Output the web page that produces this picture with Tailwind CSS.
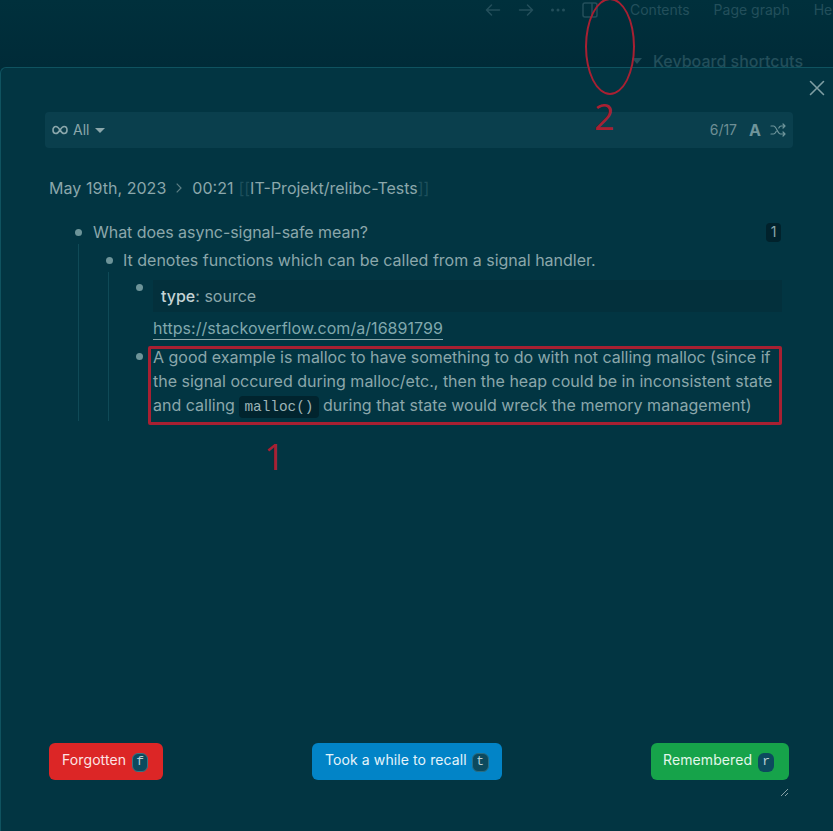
<!DOCTYPE html>
<html lang="en">
<head>
    <meta charset="UTF-8">
    <title>Flashcards</title>
    <script src="https://cdn.jsdelivr.net/npm/@tailwindcss/browser@4"></script>
</head>
<body class="bg-[#002b38] font-['Inter',sans-serif] text-[#8ba7ab]">
    <div class="relative h-[831px] w-[833px] overflow-hidden">
        <!-- Dimmed app header behind the modal -->
        <header class="h-[67px] overflow-hidden bg-gradient-to-b from-[#00303c] to-[#002b38] text-[#234f5b]">
            <div class="flex h-[19px] items-center pl-[485px] text-sm whitespace-nowrap">
                <svg class="h-4 w-4 shrink-0" viewBox="0 0 16 16" fill="none" stroke="currentColor" stroke-width="1.5" stroke-linecap="round" stroke-linejoin="round"><path d="M14.5 8h-13M6.5 3l-5 5 5 5"/></svg>
                <svg class="ml-[17px] h-4 w-4 shrink-0" viewBox="0 0 16 16" fill="none" stroke="currentColor" stroke-width="1.5" stroke-linecap="round" stroke-linejoin="round"><path d="M1.5 8h13M9.5 3l5 5-5 5"/></svg>
                <svg class="ml-[16px] h-4 w-4 shrink-0" viewBox="0 0 16 16" fill="currentColor"><circle cx="2.5" cy="8" r="1.5"/><circle cx="8" cy="8" r="1.5"/><circle cx="13.5" cy="8" r="1.5"/></svg>
                <svg class="ml-[16px] h-4 w-4 shrink-0" viewBox="0 0 16 16" fill="none" stroke="currentColor" stroke-width="1.5"><rect x="1" y="1" width="14" height="14" rx="2"/><path d="M10 1v14"/></svg>
                <span class="ml-[32px]">Contents</span>
                <span class="ml-[24px]">Page graph</span>
                <span class="ml-[24px]">Help</span>
            </div>
            <div class="mt-[30px] flex items-center pl-[632px] text-base font-medium whitespace-nowrap">
                <span class="h-0 w-0 border-x-[5px] border-t-[6px] border-x-transparent border-t-[#234f5b]"></span>
                <span class="ml-[11px]">Keyboard shortcuts</span>
            </div>
        </header>

        <!-- Flashcard modal -->
        <main class="flex h-[764px] flex-col rounded-tl-md border-t border-l border-[#0f5360] bg-[#023542] pt-[44px] pr-[40px] pl-[44px]">
            <button class="absolute top-[80px] right-[8px] text-[#7f9ea3]">
                <svg class="h-4 w-4" viewBox="0 0 16 16" fill="none" stroke="currentColor" stroke-width="1.6" stroke-linecap="round"><path d="M1.5 1.5l13 13M14.5 1.5l-13 13"/></svg>
            </button>

            <div class="flex h-9 items-center rounded bg-[#0a3f4d] pr-[7px] pl-[7px] text-sm">
                <svg class="h-[10px] w-4 text-[#8ba7ab]" viewBox="0 0 16 10" fill="none" stroke="currentColor" stroke-width="1.6"><path d="M8 5C6.6 2.8 5.6 1.5 3.9 1.5 2.2 1.5 1 3.1 1 5s1.2 3.5 2.9 3.5C5.6 8.5 6.6 7.2 8 5c1.4-2.2 2.4-3.5 4.1-3.5C13.8 1.5 15 3.1 15 5s-1.2 3.5-2.9 3.5C10.4 8.5 9.4 7.2 8 5z"/></svg>
                <span class="ml-[5px]">All</span>
                <span class="mt-[1px] ml-[6px] h-0 w-0 border-x-[5px] border-t-[5px] border-x-transparent border-t-[#8ba7ab]"></span>
                <span class="ml-auto text-[#6f8f95]">6/17</span>
                <span class="ml-3 text-base font-bold text-[#6f959b]">A</span>
                <svg class="ml-[9px] h-4 w-4 text-[#6f959b]" viewBox="0 0 16 16" fill="none" stroke="currentColor" stroke-width="1.2" stroke-linecap="round" stroke-linejoin="round"><path d="M1 4h2.5c3 0 4 8 7 8H15M1 12h2.5c1.2 0 2-1.2 2.7-2.500M8.800 6c.6-1.200 1.300-2 2.200-2H15M13 2l2 2-2 2M13 10l2 2-2 2"/></svg>
            </div>

            <div class="mt-[30px] flex h-[20px] items-center pl-1 text-base whitespace-nowrap">
                <span class="tracking-[0.05px]">May 19th, 2023</span>
                <svg class="mr-[10px] ml-[10px] h-[10px] w-[6px] text-[#5d7f85]" viewBox="0 0 6 10" fill="none" stroke="currentColor" stroke-width="1.2"><path d="M.7.7 5 5 .7 9.3"/></svg>
                <span>00:21</span>
                <span class="ml-[5px] text-[#1d4f5c]">[[</span><span>IT-Projekt/relibc-Tests</span><span class="text-[#1d4f5c]">]]</span>
            </div>

            <!-- Outline -->
            <div class="mt-[22px] pl-[30px] text-base">
                <div class="relative flex h-[24px] items-center">
                    <span class="absolute top-[9px] left-0 h-[7px] w-[7px] rounded-full bg-[#6d9499]"></span>
                    <span class="ml-[18px] tracking-[-0.05px]">What does async-signal-safe mean?</span>
                    <span class="mr-[12px] ml-auto flex h-[19px] w-[15px] items-center justify-center rounded-sm bg-[#01222c] text-sm text-[#8ba7ab]">1</span>
                </div>
                <div class="ml-[3px] border-l border-[#0f4a57] pl-[29px]">
                    <div class="relative flex h-[28px] items-center pt-[4px]">
                        <span class="absolute top-[13px] -left-[2px] h-[7px] w-[7px] rounded-full bg-[#6d9499]"></span>
                        <span class="ml-[15px]">It denotes functions which can be called from a signal handler.</span>
                    </div>
                    <div class="border-l border-[#0f4a57] pr-[11px] pl-[44px]">
                        <div class="relative pt-[8px]">
                            <span class="absolute top-[12px] -left-[17px] h-[7px] w-[7px] rounded-full bg-[#6d9499]"></span>
                            <div class="h-[32px] bg-[#03303c] pl-2 leading-[32px]"><span class="font-medium text-[#c5d4d6]">type</span>: source</div>
                            <a class="mt-[5px] block w-fit border-b border-[#8ba7ab] leading-[22px] tracking-[0.05px] text-[#80a8ad]">https://stackoverflow.com/a/16891799</a>
                        </div>
                        <div class="relative mt-[5px] pb-[2px]">
                            <span class="absolute top-[8px] -left-[17px] h-[7px] w-[7px] rounded-full bg-[#6d9499]"></span>
                            <p class="leading-[24px]">A good example is malloc to have something to do with not calling malloc (since if the signal occured during malloc/etc., then the heap could be in inconsistent state and calling <code class="rounded bg-[#01242e] px-[5px] py-[3px] font-['Liberation_Mono',monospace] text-[14.4px] text-[#9db4b7]">malloc()</code> during that state would wreck the memory management)</p>
                        </div>
                    </div>
                </div>
            </div>

            <!-- Actions -->
            <div class="mt-auto mr-[4px] mb-[51px] flex items-center justify-between pl-[4px] text-sm tracking-[0.1px]">
                <button class="flex h-[37px] w-[114px] items-center rounded-md bg-[#dc2626] pl-[13px] text-[#fde4e4]">
                    <span class="mb-[3px]">Forgotten</span>
                    <kbd class="mt-[1px] ml-[6px] flex h-[19px] w-[16px] items-center justify-center rounded-md border border-[#3c7381] bg-[#0c4a5e] font-['Liberation_Mono',monospace] text-[13px] text-[#b9cfd3]">f</kbd>
                </button>
                <button class="flex h-[37px] w-[190px] items-center rounded-md bg-[#0284c7] pl-[13px] text-[#e6f4fb]">
                    <span class="mb-[3px]">Took a while to recall</span>
                    <kbd class="mt-[1px] ml-[5px] flex h-[19px] w-[17px] items-center justify-center rounded-md border border-[#2b6e83] bg-[#0c4a5e] font-['Liberation_Mono',monospace] text-[13px] text-[#b9cfd3]">t</kbd>
                </button>
                <button class="flex h-[37px] w-[138px] items-center rounded-md bg-[#16a34a] pl-[12px] text-[#e3f7ea]">
                    <span class="mb-[3px]">Remembered</span>
                    <kbd class="mt-[1px] ml-[6px] flex h-[19px] w-[16px] items-center justify-center rounded-md bg-[#0c4a5e] font-['Liberation_Mono',monospace] text-[13px] text-[#b9cfd3]">r</kbd>
                </button>
            </div>
        </main>

        <!-- Resize handle -->
        <svg class="absolute top-[789px] left-[781px] h-2 w-2 text-[#a9bcc0]" viewBox="0 0 8 8" fill="none" stroke="currentColor" stroke-width="0.8"><path d="M0 7 7 0M4 7l3-3"/></svg>

        <!-- Red annotations on the screenshot -->
        <div class="absolute top-[346px] left-[148px] h-[79px] w-[634px] rounded-[2px] border-[3px] border-[#a82032]"></div>
        <div class="absolute top-[-2px] left-[585px] h-[97px] w-[50px] rounded-[50%] border-2 border-[#a82032]"></div>
        <span class="absolute top-[433px] left-[264px] font-['Open_Sans',sans-serif] text-[36px] leading-[48px] text-[#a82032]">1</span>
        <span class="absolute top-[93px] left-[594px] font-['Open_Sans',sans-serif] text-[36px] leading-[48px] text-[#a82032]">2</span>
    </div>
</body>
</html>
